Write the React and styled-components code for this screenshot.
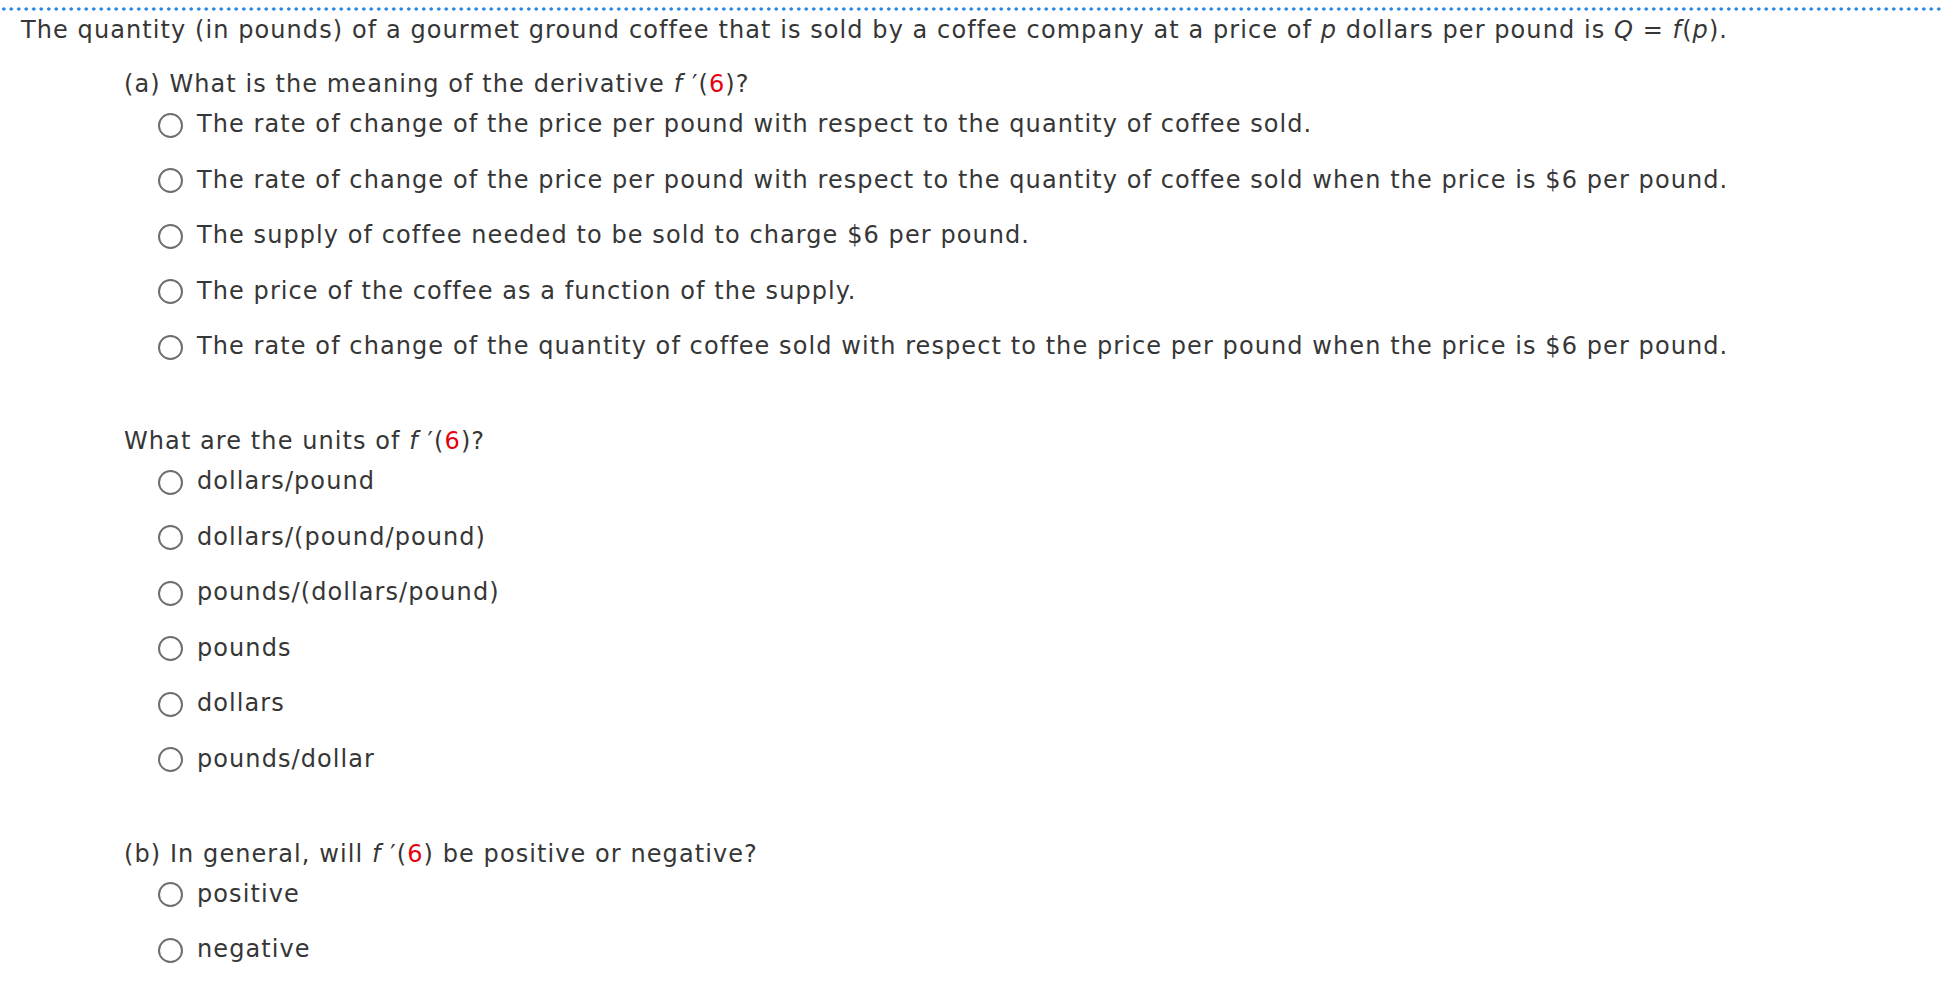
import React from 'react';
import styled, { createGlobalStyle } from 'styled-components';

const GlobalStyle = createGlobalStyle`
  html, body {
    margin: 0;
    padding: 0;
    background: #fff;
  }
  body {
    font-family: 'DejaVu Sans', Verdana, sans-serif;
    font-size: 24px;
    letter-spacing: 1.08px;
    color: #363636;
  }
`;

const Page = styled.div`
  width: 1944px;
  min-height: 986px;
`;

const DottedRule = styled.div`
  margin-top: 7px;
  height: 4px;
  background-image: radial-gradient(circle, #2384e2 1.4px, transparent 1.9px);
  background-size: 7.5px 4px;
  background-repeat: repeat-x;
`;

const Intro = styled.p`
  margin: 3px 0 0 21px;
  line-height: 32px;
`;

const Section = styled.div`
  margin: ${(p) => p.$top}px 0 0 124px;
`;

const Question = styled.p`
  margin: 0;
  line-height: 32px;
`;

const Options = styled.div`
  display: flex;
  flex-direction: column;
  gap: 23.5px;
  margin: 8px 0 0 34px;
`;

const Option = styled.label`
  display: flex;
  align-items: center;
  gap: 14px;
  line-height: 32px;
  cursor: pointer;
`;

const Radio = styled.input.attrs({ type: 'radio' })`
  appearance: none;
  margin: 2px 0 0 0;
  width: 25px;
  height: 25px;
  border: 2px solid #6e6e6e;
  border-radius: 50%;
  background: #fff;
  flex: none;

  &:checked {
    background: radial-gradient(circle, #3a3a3a 5px, #fff 6px);
  }
`;

const Red = styled.span`
  color: #e6000e;
`;

const Prime = () => (
  <>
    <i>f</i> {'\u2032'}(<Red>6</Red>)
  </>
);

const sections = [
  {
    name: 'meaning',
    top: 22,
    q: (
      <>
        (a) What is the meaning of the derivative <Prime />?
      </>
    ),
    opts: [
      'The rate of change of the price per pound with respect to the quantity of coffee sold.',
      'The rate of change of the price per pound with respect to the quantity of coffee sold when the price is $6 per pound.',
      'The supply of coffee needed to be sold to charge $6 per pound.',
      'The price of the coffee as a function of the supply.',
      'The rate of change of the quantity of coffee sold with respect to the price per pound when the price is $6 per pound.',
    ],
  },
  {
    name: 'units',
    top: 63,
    q: (
      <>
        What are the units of <Prime />?
      </>
    ),
    opts: [
      'dollars/pound',
      'dollars/(pound/pound)',
      'pounds/(dollars/pound)',
      'pounds',
      'dollars',
      'pounds/dollar',
    ],
  },
  {
    name: 'sign',
    top: 63,
    q: (
      <>
        (b) In general, will <Prime /> be positive or negative?
      </>
    ),
    opts: ['positive', 'negative'],
  },
];

export default function App() {
  return (
    <Page>
      <GlobalStyle />
      <DottedRule />
      <Intro>
        The quantity (in pounds) of a gourmet ground coffee that is sold by a coffee company at a price
        of <i>p</i> dollars per pound is <i>Q</i> = <i>f</i>(<i>p</i>).
      </Intro>
      {sections.map((s) => (
        <Section key={s.name} $top={s.top}>
          <Question>{s.q}</Question>
          <Options>
            {s.opts.map((o) => (
              <Option key={o}>
                <Radio name={s.name} />
                <span>{o}</span>
              </Option>
            ))}
          </Options>
        </Section>
      ))}
    </Page>
  );
}
